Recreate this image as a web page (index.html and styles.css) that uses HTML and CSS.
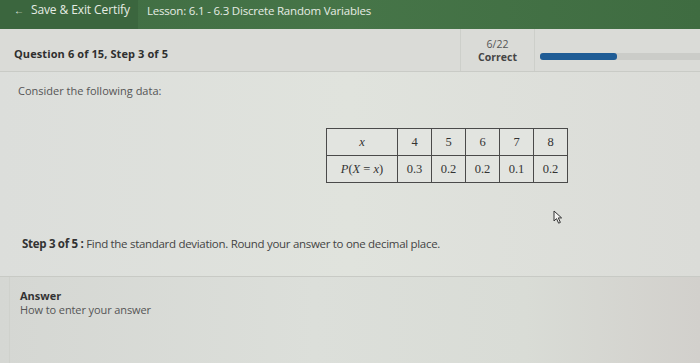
FILE: index.html
```html
<!DOCTYPE html>
<html>
<head>
<meta charset="utf-8">
<link rel="stylesheet" href="styles.css">
</head>
<body>
<div class="page">
  <header class="topbar">
    <div class="exit"><span class="arrow">&#8592;</span> Save &amp; Exit Certify</div>
    <div class="lesson">Lesson: 6.1 - 6.3 Discrete Random Variables</div>
  </header>
  <div class="qrow">
    <div class="qtitle">Question 6 of 15, Step 3 of 5</div>
    <div class="score">
      <div class="frac">6/22</div>
      <div class="correct">Correct</div>
    </div>
    <div class="progress"><div class="fill"></div></div>
  </div>
  <main class="content">
    <p class="intro">Consider the following data:</p>
    <div class="tablewrap">
      <table class="data">
        <tr><td class="lab"><i>x</i></td><td>4</td><td>5</td><td>6</td><td>7</td><td>8</td></tr>
        <tr><td class="lab"><i>P</i>(<i>X</i> = <i>x</i>)</td><td>0.3</td><td>0.2</td><td>0.2</td><td>0.1</td><td>0.2</td></tr>
      </table>
      <svg class="cursor" width="12" height="15" viewBox="0 0 12 15"><path d="M1 1 L1 11 L3.5 8.6 L5.6 13.2 L7.4 12.4 L5.3 7.9 L8.6 7.9 Z" fill="#f4f4f2" stroke="#333" stroke-width="1"/></svg>
    </div>
    <p class="step"><b>Step 3 of 5 :</b> Find the standard deviation. Round your answer to one decimal place.</p>
  </main>
  <section class="answer">
    <div class="ans-title">Answer</div>
    <div class="ans-link">How to enter your answer</div>
  </section>
</div>
</body>
</html>
```

FILE: styles.css
```css
html, body {
  margin: 0;
  padding: 0;
}
body {
  width: 700px;
  height: 363px;
  overflow: hidden;
  font-family: "Open Sans", "Liberation Sans", sans-serif;
  background: #d9dbd6;
  color: #3a3a3a;
}
.page {
  height: 363px;
  display: flex;
  flex-direction: column;
  background: linear-gradient(90deg, #d5d7d3 0%, #dcdfda 45%, #d9dcd6 75%, #d2d0cc 100%);
}
.topbar {
  height: 29px;
  display: flex;
  align-items: flex-start;
  background: linear-gradient(90deg, #3f6c42 0%, #467548 50%, #3f6c41 100%);
  color: #e6ece4;
  font-size: 11.5px;
}
.exit {
  width: 124px;
  padding-left: 14px;
  padding-top: 1px;
  height: 28px;
  background: #3b663e;
  letter-spacing: -0.1px;
  font-size: 12px;
}
.arrow {
  font-size: 10px;
  margin-right: 4px;
}
.lesson {
  padding-left: 9px;
  padding-top: 3px;
  letter-spacing: -0.2px;
}
.qrow {
  height: 42px;
  display: flex;
  align-items: center;
  border-bottom: 1px solid #c9cbc6;
  background: #dadbd7;
}
.qtitle {
  width: 446px;
  padding-left: 14px;
  font-weight: 700;
  font-size: 11px;
  color: #2f2f2f;
  margin-top: 6px;
  letter-spacing: 0.1px;
}
.score {
  width: 75px;
  height: 42px;
  border-left: 1px solid #cdcfca;
  border-right: 1px solid #cdcfca;
  display: flex;
  flex-direction: column;
  align-items: center;
  justify-content: center;
  font-size: 10.5px;
  line-height: 13px;
  color: #555;
  padding-top: 2px;
  box-sizing: border-box;
}
.correct {
  font-weight: 700;
  color: #454545;
}
.progress {
  flex: 1;
  margin-left: 5px;
  height: 7px;
  margin-top: 12px;
  background: #cbccc8;
  border-radius: 3px 0 0 3px;
}
.fill {
  width: 77px;
  height: 7px;
  background: #1f5c95;
  border-radius: 3px;
}
.content {
  height: 204px;
  padding: 0 0 0 18px;
  border-bottom: 1px solid #c8cac5;
  background: linear-gradient(90deg, #dcdedb 0%, #e0e3dd 50%, #dbdcd8 100%);
}
.intro {
  margin: 11px 0 0 0;
  font-size: 11px;
  color: #555;
}
.tablewrap {
  display: flex;
  padding-left: 308px;
  margin-top: 30px;
  height: 113px;
}
.data {
  border-collapse: collapse;
  font-family: "Liberation Serif", "Times New Roman", serif;
  font-size: 12.5px;
  color: #333;
  height: 55px;
  align-self: flex-start;
  background: #e2e4e0;
}
.data td {
  border: 1px solid #4a4a4a;
  text-align: center;
  width: 33px;
  padding: 0;
  height: 26px;
}
.data td.lab {
  width: 70px;
}
.cursor {
  margin-left: -15px;
  margin-top: 82px;
}
.step {
  margin: -5px 0 0 4px;
  font-size: 11.5px;
  color: #444;
  letter-spacing: -0.3px;
}
.step b {
  color: #333;
}
.answer {
  flex: 1;
  padding: 12px 0 0 20px;
  margin-left: 9px;
  border-left: 1px solid #cfd1cc;
  font-size: 11px;
  line-height: 14px;
}
.ans-title {
  font-weight: 700;
  color: #333;
  margin-left: -10px;
}
.ans-link {
  color: #555;
  margin-left: -10px;
  letter-spacing: -0.1px;
}
```
